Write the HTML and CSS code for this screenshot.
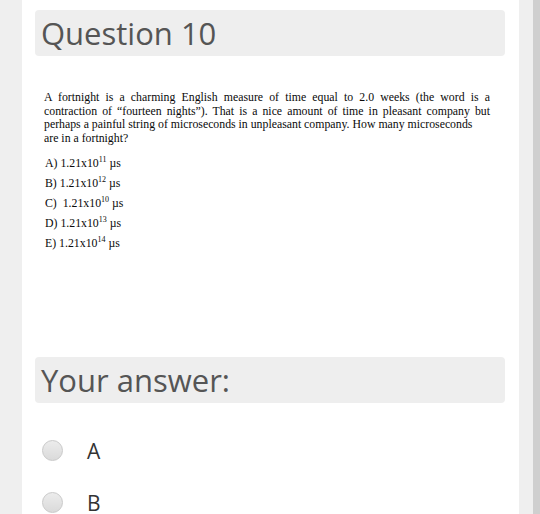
FILE: index.html
```html
<html>
	<head>
		<meta charset="utf-8">
		<link rel="stylesheet" href="styles.css">
	</head>
	<body>
		<div class="page">
			<div class="card">

				<div class="header">Question 10</div>

				<div class="question">
					<span class="line full">A fortnight is a charming English measure of time equal to 2.0 weeks (the word is a</span>
					<span class="line full">contraction of &ldquo;fourteen nights&rdquo;). That is a nice amount of time in pleasant company but</span>
					<span class="line">perhaps a painful string of microseconds in unpleasant company. How many microseconds</span>
					<span class="line">are in a fortnight?</span>
				</div>

				<div class="options">
					<div class="option">A) 1.21x10<sup>11</sup> &micro;s</div>
					<div class="option">B) 1.21x10<sup>12</sup> &micro;s</div>
					<div class="option">C)&nbsp; 1.21x10<sup>10</sup> &micro;s</div>
					<div class="option">D) 1.21x10<sup>13</sup> &micro;s</div>
					<div class="option">E) 1.21x10<sup>14</sup> &micro;s</div>
				</div>

				<div class="header answer">Your answer:</div>

				<div class="choices">
					<label class="choice"><span class="radio"></span><span class="choice-label">A</span></label>
					<label class="choice"><span class="radio"></span><span class="choice-label">B</span></label>
				</div>

			</div>
		</div>
		<div class="scrollbar"></div>
	</body>
</html>
```

FILE: styles.css
```css
html, body {
	height: 100%;
}

body {
	margin: 0;
	background: #efefef;
	display: flex;
	overflow: hidden;
	font-family: "Open Sans", sans-serif;
}

div.page {
	flex: 1;
	padding: 0 14px 0 22px;
}

div.scrollbar {
	width: 7px;
	background: #cfcfcf;
}

div.card {
	background: #ffffff;
	min-height: 100%;
	padding: 10px 14px 0 13px;
	box-sizing: border-box;
}

div.header {
	background: #eeeeee;
	border-radius: 4px;
	height: 46px;
	line-height: 46px;
	padding: 0 6px;
	font-size: 31px;
	color: #555555;
}

div.question {
	margin: 35px 15px 0 9px;
	font-family: "Liberation Serif", serif;
	font-size: 11.8px;
	line-height: 13.6px;
	color: #0a0a0a;
}

span.line {
	display: block;
	white-space: nowrap;
}

span.line.full {
	text-align: justify;
	text-align-last: justify;
	white-space: normal;
}

div.options {
	margin: 8px 0 0 10px;
	font-family: "Liberation Serif", serif;
	font-size: 11.8px;
	color: #0a0a0a;
}

div.option {
	height: 20px;
	line-height: 20px;
}

div.option sup {
	font-size: 8px;
	line-height: 0;
	vertical-align: 5px;
}

div.header.answer {
	margin-top: 104px;
}

div.choices {
	margin-top: 37px;
}

label.choice {
	display: flex;
	align-items: center;
	height: 21px;
	margin-bottom: 31px;
	padding-left: 7px;
}

span.radio {
	width: 19px;
	height: 19px;
	border-radius: 50%;
	border: 1px solid #c9c9c9;
	background: linear-gradient(#ececec, #dadada);
}

span.choice-label {
	margin-left: 24px;
	font-size: 21px;
	color: #333333;
}
```
